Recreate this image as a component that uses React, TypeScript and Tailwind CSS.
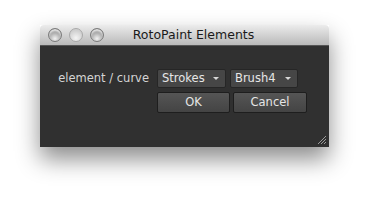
// RotoPaint Elements — small mac-style dialog over a white page
function Light({ dim }: { dim?: boolean }) {
  return (
    <div
      className={
        dim
          ? 'w-[14px] h-[14px] rounded-full border border-[#a9a9a9] bg-[radial-gradient(circle_at_50%_75%,#f4f4f4,#cfcfcf_70%)]'
          : 'w-[14px] h-[14px] rounded-full border border-[#7b7b7b] bg-[radial-gradient(circle_at_50%_80%,#f2f2f2,#a6a6a6_55%,#6f6f6f)] shadow-[inset_0_2px_2px_rgba(255,255,255,0.8)]'
      }
    />
  )
}

function Dropdown({ label, width }: { label: string; width: string }) {
  return (
    <div
      className={`${width} h-[19px] flex items-center justify-between pl-[4px] pr-[6px] rounded-[2px] bg-[#464646] border border-[#262626] text-[#e6e6e6]`}
    >
      <span>{label}</span>
      <span className="w-0 h-0 border-l-[3px] border-r-[3px] border-t-[3px] border-l-transparent border-r-transparent border-t-[#d8d8d8]" />
    </div>
  )
}

function Button({ label, width }: { label: string; width: string }) {
  return (
    <div
      className={`${width} h-[21px] flex items-center justify-center rounded-[2px] bg-gradient-to-b from-[#555] to-[#444] border border-[#1e1e1e] text-[#e6e6e6]`}
    >
      {label}
    </div>
  )
}

export default function App() {
  return (
    <div
      className="w-[369px] h-[202px] bg-white pt-[25px] pl-[40px]"
      style={{ fontFamily: '"DejaVu Sans", "Noto Sans", sans-serif' }}
    >
      <div className="w-[289px] h-[122px] flex flex-col shadow-[0_12px_22px_rgba(0,0,0,0.45)]">
        <div className="h-[21px] relative flex items-center justify-center rounded-t-[4px] bg-gradient-to-b from-[#ececec] to-[#b9b9b9] border-b border-[#555]">
          <div className="absolute left-[8px] top-[3px] flex gap-[7px]">
            <Light />
            <Light dim />
            <Light />
          </div>
          <span className="text-[12.5px] text-[#1a1a1a] pl-[18px]">RotoPaint Elements</span>
        </div>
        <div className="flex-1 relative bg-[#303030] pt-[23px] text-[11.5px]">
          <div className="flex items-center">
            <div className="w-[117px] text-right pr-[8px] text-[#d4d4d4]">element / curve</div>
            <div className="flex gap-[4px]">
              <Dropdown label="Strokes" width="w-[69px]" />
              <Dropdown label="Brush4" width="w-[68px]" />
            </div>
          </div>
          <div className="flex mt-[4px]">
            <div className="w-[117px]" />
            <div className="flex gap-[3px]">
              <Button label="OK" width="w-[73px]" />
              <Button label="Cancel" width="w-[74px]" />
            </div>
          </div>
          <svg className="absolute right-[2px] bottom-[2px]" width="10" height="10" viewBox="0 0 10 10">
            <path d="M9 1 L1 9 M9 4 L4 9 M9 7 L7 9" stroke="#9a9a9a" strokeWidth="1" />
          </svg>
        </div>
      </div>
    </div>
  )
}
